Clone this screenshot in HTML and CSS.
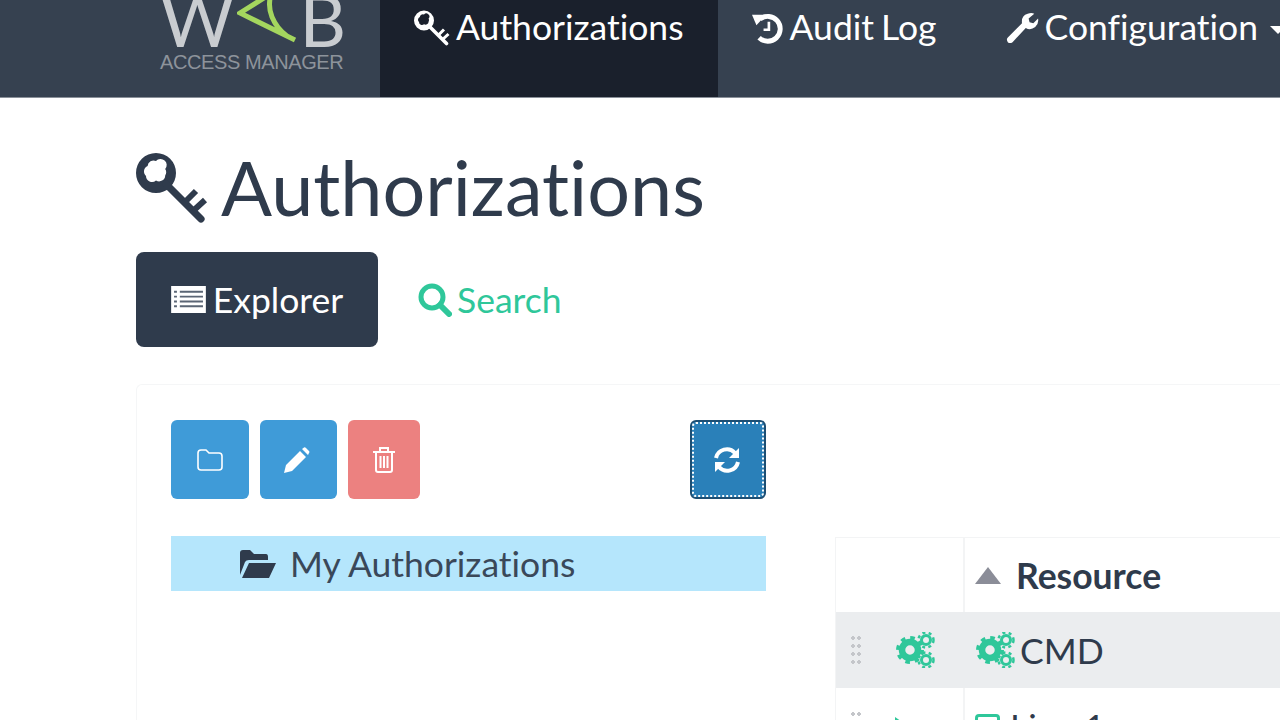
FILE: index.html
```html
<!DOCTYPE html>
<html lang="en">

<head>
    <meta charset="UTF-8">
    <title>Authorizations</title>
    <link rel="stylesheet" href="styles.css">
</head>

<body>
    <nav class="navbar">
        <div class="brand">
            <div class="brand-mark">
                <span class="brand-letter">W</span>
                <svg class="brand-arrow" viewBox="0 0 60 48" width="60" height="48">
                    <path d="M38 -4 L3 18 L58 45 M35 -4 Q30 10 35 22 Q40 34 50 41" fill="none" stroke="#a4d65e" stroke-width="5"/>
                </svg>
                <span class="brand-letter">B</span>
            </div>
            <div class="brand-sub">ACCESS MANAGER</div>
        </div>
        <a class="nav-item active">
            <svg class="nav-icon" viewBox="0 0 36 36" width="36" height="36"><use href="#key"/></svg>
            Authorizations
        </a>
        <a class="nav-item">
            <svg class="nav-icon" viewBox="0 0 36 36" width="32" height="36"><use href="#history"/></svg>
            Audit Log
        </a>
        <a class="nav-item">
            <svg class="nav-icon" viewBox="0 0 36 36" width="34" height="36"><use href="#wrench"/></svg>
            Configuration <span class="caret"></span>
        </a>
    </nav>

    <main class="content">
        <h1 class="page-title">
            <svg class="title-icon" viewBox="0 0 36 36" width="72" height="72"><use href="#key"/></svg>
            Authorizations
        </h1>

        <div class="tabs">
            <a class="tab active">
                <svg viewBox="0 0 36 28" width="35" height="27">
                    <rect width="36" height="28" fill="#fff"/>
                    <path d="M9 6h24M9 11h24M9 16h24M9 21h24M3 6h3M3 11h3M3 16h3M3 21h3" stroke="#5a6574" stroke-width="2"/>
                </svg>
                Explorer
            </a>
            <a class="tab">
                <svg viewBox="0 0 34 34" width="34" height="34">
                    <circle cx="14" cy="14" r="11" fill="none" stroke="#2fc79a" stroke-width="5"/>
                    <path d="M22 22 L31 31" stroke="#2fc79a" stroke-width="6" stroke-linecap="round"/>
                </svg>
                Search
            </a>
        </div>

        <section class="panel">
            <div class="tree-col">
                <div class="toolbar">
                    <button class="btn btn-folder">
                        <svg viewBox="0 0 28 24" width="28" height="24">
                            <path d="M2 5 Q2 2 5 2 H10 L13 5 H23 Q26 5 26 8 V19 Q26 22 23 22 H5 Q2 22 2 19 Z" fill="none" stroke="#fff" stroke-width="1.6"/>
                        </svg>
                    </button>
                    <button class="btn btn-edit">
                        <svg viewBox="0 0 28 28" width="28" height="28">
                            <path d="M1 27 L3 19 L17 5 L23 11 L9 25 Z M19 3 L21 1.5 Q22 1 23 2 L26 5 Q27 6 26 7 L25 9 Z" fill="#fff"/>
                        </svg>
                    </button>
                    <button class="btn btn-delete">
                        <svg viewBox="0 0 24 28" width="24" height="28">
                            <path d="M1 6 H23 M8 6 V2 H16 V6" fill="none" stroke="#fff" stroke-width="2"/>
                            <path d="M4 6 V24 Q4 26 6 26 H18 Q20 26 20 24 V6" fill="none" stroke="#fff" stroke-width="2"/>
                            <path d="M8.5 10 V22 M12 10 V22 M15.5 10 V22" stroke="#fff" stroke-width="2"/>
                        </svg>
                    </button>
                    <button class="btn btn-refresh">
                        <svg viewBox="0 0 28 28" width="28" height="28">
                            <path d="M3 12 A11 11 0 0 1 22 7" fill="none" stroke="#fff" stroke-width="4"/>
                            <path d="M26 2 V12 H16 Z" fill="#fff"/>
                            <path d="M25 16 A11 11 0 0 1 6 21" fill="none" stroke="#fff" stroke-width="4"/>
                            <path d="M2 26 V16 H12 Z" fill="#fff"/>
                        </svg>
                    </button>
                </div>
                <div class="tree-row">
                    <svg viewBox="0 0 38 30" width="38" height="30">
                        <path d="M1 26 V4 Q1 1 4 1 H11 L15 5 H27 Q29 5 29 8 V11 H10 Q7 11 6 13 Z M3 29 L10 14 H37 L30 29 Z" fill="#2f3b4c"/>
                    </svg>
                    <span>My Authorizations</span>
                </div>
            </div>

            <div class="table">
                <div class="table-row table-head">
                    <div class="cell-handle"></div>
                    <div class="cell-name">
                        <span class="sort-arrow"></span>
                        <strong>Resource</strong>
                    </div>
                </div>
                <div class="table-row striped">
                    <div class="cell-handle">
                        <span class="grip"></span>
                        <svg viewBox="0 0 40 36" width="40" height="36"><use href="#gears"/></svg>
                    </div>
                    <div class="cell-name">
                        <svg viewBox="0 0 40 36" width="40" height="36"><use href="#gears"/></svg>
                        <span>CMD</span>
                    </div>
                </div>
                <div class="table-row">
                    <div class="cell-handle">
                        <span class="grip"></span>
                        <span class="expand"></span>
                    </div>
                    <div class="cell-name">
                        <span class="line-box"></span>
                        <span>Line 1</span>
                    </div>
                </div>
            </div>
        </section>
    </main>

    <svg class="defs" width="0" height="0">
        <defs>
            <g id="key">
                <path fill="currentColor" fill-rule="evenodd" d="M10 0.5 A10 10 0 1 1 10 20.5 A10 10 0 1 1 10 0.5 Z M10 4.5 a3 3 0 0 0 -4.2 2.5 a3 3 0 0 0 -0.8 5 a3 3 0 0 0 5 2.2 a3 3 0 0 0 4.6 -2.5 a3 3 0 0 0 0 -3.2 a3 3 0 0 0 -4.6 -4 Z"/>
                <path d="M15 16 L32.5 33.5" fill="none" stroke="currentColor" stroke-width="3.6" stroke-linecap="round"/>
                <path d="M24.5 25 L30 19.5 M28.5 29.5 L34.5 24" fill="none" stroke="currentColor" stroke-width="3"/>
            </g>
            <g id="history" fill="none" stroke="currentColor">
                <path d="M9 8 A14 14 0 1 1 8 29" stroke-width="5.5"/>
                <path d="M0 3 L16 3 L5 15 Z" fill="currentColor" stroke="none"/>
                <path d="M19 11 V20 H13" stroke-width="3"/>
            </g>
            <g id="wrench" fill="currentColor">
                <path d="M3 28 L18 13 Q17 5 24 3 Q28 1 31 3 L25 8 L26 12 L30 13 L35 8 Q36 13 32 17 Q27 21 22 18 L8 33 Q5 35 3 33 Q1 30 3 28 Z"/>
            </g>
            <g id="gears" fill="none" stroke="#2fc79a">
                <circle cx="15" cy="18" r="8" stroke-width="6.5"/>
                <circle cx="15" cy="18" r="12" stroke-width="4" stroke-dasharray="4.5 4.9"/>
                <circle cx="31" cy="8" r="4.5" stroke-width="3"/>
                <circle cx="31" cy="8" r="7.5" stroke-width="2.5" stroke-dasharray="3 3.3"/>
                <circle cx="31" cy="28" r="4.5" stroke-width="3"/>
                <circle cx="31" cy="28" r="7.5" stroke-width="2.5" stroke-dasharray="3 3.3"/>
            </g>
        </defs>
    </svg>
</body>

</html>
```

FILE: styles.css
```css
* {
    box-sizing: border-box;
}

html, body {
    height: 100%;
}

body {
    margin: 0;
    width: 1280px;
    height: 720px;
    overflow: hidden;
    background: #fff;
    font-family: Lato, "Noto Sans", sans-serif;
    font-variant-ligatures: none;
    color: #2f3b4c;
}

.defs {
    display: none;
}

/* top bar */
.navbar {
    display: flex;
    height: 98px;
    overflow: hidden;
    background: #364150;
    border-bottom: 1px solid #8a9099;
    color: #fff;
}

.brand {
    width: 380px;
    padding-left: 160px;
    display: flex;
    flex-direction: column;
    justify-content: flex-end;
    padding-bottom: 23px;
    flex: none;
}

.brand-mark {
    display: flex;
    justify-content: space-between;
    align-items: flex-end;
    height: 48px;
    width: 186px;
}

.brand-letter {
    font-size: 72px;
    font-weight: 400;
    color: #c9ccd0;
    line-height: 48px;
}

.brand-arrow {
    flex: none;
}

.brand-sub {
    font-family: "Liberation Sans", sans-serif;
    font-size: 20px;
    letter-spacing: -0.4px;
    color: #8d939b;
    margin-top: 8px;
    white-space: nowrap;
}

.nav-item {
    display: flex;
    align-items: flex-start;
    gap: 6px;
    padding: 6px 34px 0;
    font-size: 35.5px;
    word-spacing: -2px;
    line-height: 42px;
    white-space: nowrap;
    flex: none;
}

.nav-item.active {
    background: #1a202c;
}

.nav-icon {
    flex: none;
    margin-top: 4px;
}

.caret {
    display: inline-block;
    width: 0;
    height: 0;
    margin: 20px 0 0 6px;
    border-left: 8px solid transparent;
    border-right: 8px solid transparent;
    border-top: 8px solid #fff;
}

/* page */
.content {
    padding: 0 0 0 136px;
}

.page-title {
    display: flex;
    align-items: center;
    gap: 13px;
    margin: 47px 0 0;
    height: 84px;
    font-size: 75.5px;
    font-weight: 400;
    line-height: 84px;
}

.title-icon {
    flex: none;
    margin-top: 2px;
}

.tabs {
    display: flex;
    align-items: center;
    gap: 40px;
    margin-top: 23px;
    font-size: 35.5px;
}

.tab {
    display: flex;
    align-items: center;
    gap: 5px;
    color: #2fc79a;
}

.tab.active {
    width: 242px;
    height: 95px;
    justify-content: center;
    gap: 7px;
    background: #2f3b4c;
    border-radius: 8px;
    color: #fff;
}

.panel {
    display: flex;
    align-items: flex-start;
    gap: 69px;
    margin-top: 37px;
    padding: 35px 0 0 34px;
    width: 1200px;
    height: 400px;
    border-top: 1px solid #f5f6f7;
    border-left: 1px solid #f5f6f7;
    border-radius: 6px 0 0 0;
}

.tree-col {
    width: 595px;
    flex: none;
}

.toolbar {
    display: flex;
    gap: 11px;
}

.btn {
    display: flex;
    align-items: center;
    justify-content: center;
    height: 79px;
    padding: 0;
    border: none;
    border-radius: 6px;
    background: #3f9bd8;
}

.btn-folder {
    width: 78px;
}

.btn-edit {
    width: 77px;
    padding-right: 3px;
}

.btn-delete {
    width: 72px;
    background: #ec8180;
}

.btn-refresh {
    width: 76px;
    margin-left: auto;
    padding-right: 3px;
    background: #2a80b9;
    outline: 2px dotted #fff;
    outline-offset: -4px;
    border: 2px solid #1d4f74;
}

.tree-row {
    display: flex;
    align-items: center;
    gap: 13px;
    height: 55px;
    margin-top: 37px;
    padding-left: 68px;
    background: #b5e6fc;
    font-size: 35.5px;
    color: #3a4859;
}

.table {
    width: 600px;
    margin-top: 117px;
    flex: none;
    border-top: 1px solid #f3f4f5;
    border-left: 1px solid #f3f4f5;
}

.table-row {
    display: flex;
    height: 76px;
}

.table-head {
    height: 74px;
}

.striped {
    background: #ebedef;
}

.cell-handle {
    width: 129px;
    flex: none;
    display: flex;
    align-items: center;
    padding-left: 14px;
    gap: 33px;
    border-right: 2px solid #f3f4f5;
}

.striped .cell-handle {
    border-right: none;
}

.cell-name {
    display: flex;
    align-items: center;
    gap: 5px;
    padding-left: 10px;
    font-size: 35.5px;
}

.sort-arrow {
    width: 0;
    height: 0;
    margin-right: 10px;
    border-left: 13px solid transparent;
    border-right: 13px solid transparent;
    border-bottom: 17px solid #8b8d98;
}

.grip {
    width: 12px;
    height: 32px;
    flex: none;
    background: radial-gradient(circle, #c4c6ca 1.6px, transparent 2px) 0 0 / 6px 8px;
}

.line-box {
    width: 25px;
    height: 25px;
    margin-right: 5px;
    border: 3px solid #2fc79a;
    border-radius: 4px;
}

.expand {
    width: 0;
    height: 0;
    border-top: 9px solid transparent;
    border-bottom: 9px solid transparent;
    border-left: 13px solid #2fc79a;
}
```
